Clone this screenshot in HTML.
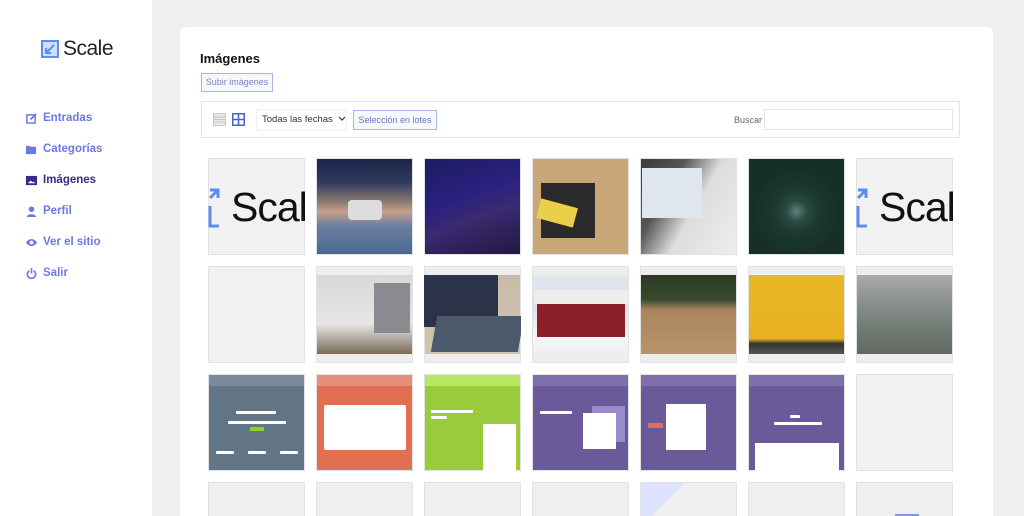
<!DOCTYPE html>
<html style="width:1024px;height:516px;overflow:hidden"><head><meta charset="utf-8"><style>
*{margin:0;padding:0;box-sizing:border-box}
body{width:1024px;height:516px;overflow:hidden;background:#efefef;font-family:"Liberation Sans",sans-serif;position:relative}
.side{position:absolute;left:0;top:0;width:152px;height:516px;background:#fff}
.logo{position:absolute;left:41px;top:37px;font-size:21px;color:#222;display:flex;align-items:center;gap:4px;letter-spacing:-0.5px}
.nav{position:absolute;left:26px;font-size:11.5px;font-weight:bold;color:#6b78e6;display:flex;align-items:center;gap:6px}
.nav.act{color:#3b2a8c}
.ic{width:11px;height:11px;display:inline-block}
.card{position:absolute;left:180px;top:27px;width:813px;height:489px;background:#fff;border-radius:6px 6px 0 0}
.t{position:absolute;white-space:nowrap}
.tile{position:absolute;width:97px;height:97px;background:#efefef;overflow:hidden;box-shadow:inset 0 0 0 1px #e2e2e2}
.r4{height:34px;box-shadow:inset 1px 1px 0 #e2e2e2,inset -1px 0 0 #e2e2e2}
.sc{font-size:41px;color:#111;position:absolute;left:23px;top:26px;letter-spacing:-1px}
.bar{position:absolute;height:3px;background:#fff;border-radius:1px}
</style></head><body>
<div class="side">
 <div class="logo"><svg width="18" height="18" viewBox="0 0 18 18"><rect x="1" y="1" width="16" height="16" fill="#cfe0ff" stroke="#5b8ef0" stroke-width="2"/><path d="M5 13L13 5M5 8v5h5" stroke="#5b8ef0" stroke-width="2" fill="none"/></svg><span>Scale</span></div>
 <div class="nav" style="top:112px"><svg class="ic" viewBox="0 0 12 12"><rect x="1" y="2" width="9" height="9" fill="none" stroke="#6b78e6" stroke-width="1.6"/><path d="M5 7l6-6" stroke="#6b78e6" stroke-width="2"/></svg>Entradas</div>
 <div class="nav" style="top:143px"><svg class="ic" viewBox="0 0 12 12"><path d="M0 2h4l1 1h6v8H0z" fill="#6b78e6"/></svg>Categorías</div>
 <div class="nav act" style="top:174px"><svg class="ic" viewBox="0 0 12 12"><rect x="0" y="1" width="12" height="10" fill="#3b2a8c"/><path d="M2 9l3-3 2 2 1-1 2 2z" fill="#fff"/></svg>Imágenes</div>
 <div class="nav" style="top:205px"><svg class="ic" viewBox="0 0 12 12"><circle cx="6" cy="3.5" r="3" fill="#6b78e6"/><path d="M1 12c0-4 10-4 10 0z" fill="#6b78e6"/></svg>Perfil</div>
 <div class="nav" style="top:236px"><svg class="ic" viewBox="0 0 12 12"><path d="M0 6c3-5 9-5 12 0c-3 5-9 5-12 0z" fill="#6b78e6"/><circle cx="6" cy="6" r="2" fill="#fff"/></svg>Ver el sitio</div>
 <div class="nav" style="top:267px"><svg class="ic" viewBox="0 0 12 12"><path d="M3.5 3a4.5 4.5 0 1 0 5 0" fill="none" stroke="#6b78e6" stroke-width="1.8"/><path d="M6 0v6" stroke="#6b78e6" stroke-width="1.8"/></svg>Salir</div>
</div>
<div class="card"></div>
<div class="t" style="left:200px;top:51px;font-size:13px;font-weight:bold;color:#111">Imágenes</div>
<div class="t" style="left:201px;top:73px;width:72px;height:19px;border:1px solid #a9b3ee;background:#f7f8ff;font-size:9px;color:#7a84c8;text-align:center;line-height:17px">Subir imágenes</div>
<div class="t" style="left:201px;top:101px;width:759px;height:37px;border:1px solid #e3e3e3"></div>
<svg class="t" style="left:213px;top:113px" width="13" height="13"><rect x="0.5" y="0.5" width="12" height="12" fill="#e8e8e8" stroke="#c8c8c8"/><path d="M1 4h11M1 6.5h11M1 9h11" stroke="#c8c8c8"/></svg>
<svg class="t" style="left:232px;top:113px" width="13" height="13"><rect x="0.75" y="0.75" width="11.5" height="11.5" fill="none" stroke="#4a63c9" stroke-width="1.5"/><path d="M6.5 1v11M1 6.5h11" stroke="#4a63c9" stroke-width="1.5"/></svg>
<div class="t" style="left:256px;top:109px;width:91px;height:22px;border:1px solid #eee;font-size:9.5px;color:#333;line-height:20px;padding-left:5px">Todas las fechas<svg width="8" height="6" viewBox="0 0 8 6" style="margin-left:5px"><path d="M1 1l3 3 3-3" stroke="#333" stroke-width="1.2" fill="none"/></svg></div>
<div class="t" style="left:353px;top:110px;width:84px;height:20px;border:1px solid #a9b3ee;background:#f7f8ff;font-size:9px;color:#6a74c0;text-align:center;line-height:18px">Selección en lotes</div>
<div class="t" style="left:734px;top:115px;font-size:9px;color:#666">Buscar</div>
<div class="t" style="left:764px;top:109px;width:189px;height:21px;border:1px solid #e6e6e6"></div>

<!-- row1 -->
<div class="tile" style="left:208px;top:158px;background:#f2f2f2"><svg class="t" style="left:0;top:30px" width="12" height="40"><path d="M2 2h8v8M10 2L2 10M2 18v20h9" stroke="#5b8ef0" stroke-width="3" fill="none"/></svg><span class="sc">Scal</span></div>
<div class="tile" style="left:316px;top:158px;background:linear-gradient(#1c2448 0%,#2f3a5c 25%,#8a7a70 45%,#c7a08a 55%,#6a7fa0 70%,#4a6790 100%)"><div class="t" style="left:32px;top:42px;width:34px;height:20px;background:#ddd;border-radius:4px"></div></div>
<div class="tile" style="left:424px;top:158px;background:linear-gradient(160deg,#1e1c5e,#2a2080 40%,#3a2a70 60%,#201840)"></div>
<div class="tile" style="left:532px;top:158px;background:#c9a678"><div class="t" style="left:9px;top:25px;width:54px;height:55px;background:#2a2a2a"></div><div class="t" style="left:6px;top:45px;width:38px;height:20px;background:#e8d04a;transform:rotate(15deg)"></div></div>
<div class="tile" style="left:640px;top:158px;background:linear-gradient(120deg,#3a3a3a 0%,#555 30%,#ddd 55%,#eee 100%)"><div class="t" style="left:2px;top:10px;width:60px;height:50px;background:#e0e6ee"></div></div>
<div class="tile" style="left:748px;top:158px;background:radial-gradient(circle at 50% 55%,#5a8080 0,#2a4a40 15%,#1c3a30 30%,#163026 60%)"></div>
<div class="tile" style="left:856px;top:158px;background:#f2f2f2"><svg class="t" style="left:0;top:30px" width="12" height="40"><path d="M2 2h8v8M10 2L2 10M2 18v20h9" stroke="#5b8ef0" stroke-width="3" fill="none"/></svg><span class="sc">Scal</span></div>
<!-- row2 -->
<div class="tile" style="left:208px;top:266px;background:#f1f1f1"></div>
<div class="tile" style="left:316px;top:266px;background:linear-gradient(#eee 0 9px,#d8d8d8 9px,#e6e6e6 60%,#7a6a58 88px,#eee 88px)"><div class="t" style="left:58px;top:17px;width:36px;height:50px;background:#8a8a90"></div></div>
<div class="tile" style="left:424px;top:266px;background:linear-gradient(#eee 0 9px,#c8bca8 9px,#d0c4b0 88px,#eee 88px)"><div class="t" style="left:0;top:9px;width:74px;height:52px;background:#2a3348"></div><div class="t" style="left:10px;top:50px;width:87px;height:36px;background:#4a5a6a;transform:skewX(-10deg)"></div></div>
<div class="tile" style="left:532px;top:266px;background:linear-gradient(#eee 0 9px,#e2e8ee 9px,#dde 40%,#f6f6f8 75%,#eee 88px)"><div class="t" style="left:5px;top:33px;width:88px;height:38px;background:#8a2028"></div><div class="t" style="left:2px;top:24px;width:94px;height:14px;background:#eee"></div></div>
<div class="tile" style="left:640px;top:266px;background:linear-gradient(#eee 0 9px,#2a3a22 9px,#3a4a30 35%,#a8855e 45%,#b89468 88px,#eee 88px)"></div>
<div class="tile" style="left:748px;top:266px;background:linear-gradient(#eee 0 9px,#e8b828 9px,#e8b020 75%,#333 80%,#555 88px,#eee 88px)"></div>
<div class="tile" style="left:856px;top:266px;background:linear-gradient(#eee 0 9px,#aaa 9px,#7d8580 50%,#606860 88px,#eee 88px)"></div>
<!-- row3 -->
<div class="tile" style="left:208px;top:374px;background:linear-gradient(#7a8a99 0 12px,#627585 12px)"><div class="bar" style="left:28px;top:37px;width:40px"></div><div class="bar" style="left:20px;top:47px;width:58px"></div><div class="t" style="left:42px;top:53px;width:14px;height:4px;background:#8fd120"></div><div class="bar" style="left:8px;top:77px;width:18px"></div><div class="bar" style="left:40px;top:77px;width:18px"></div><div class="bar" style="left:72px;top:77px;width:18px"></div></div>
<div class="tile" style="left:316px;top:374px;background:linear-gradient(#e5907a 0 12px,#e36f52 12px)"><div class="t" style="left:8px;top:31px;width:82px;height:45px;background:#fff;border-radius:2px"></div></div>
<div class="tile" style="left:424px;top:374px;background:linear-gradient(#b8e860 0 12px,#9acb3c 12px)"><div class="bar" style="left:7px;top:36px;width:42px"></div><div class="bar" style="left:7px;top:42px;width:16px"></div><div class="t" style="left:59px;top:50px;width:33px;height:47px;background:#fff"></div></div>
<div class="tile" style="left:532px;top:374px;background:linear-gradient(#8070aa 0 12px,#6a5a9a 12px)"><div class="t" style="left:60px;top:32px;width:33px;height:36px;background:#9a8cc8"></div><div class="t" style="left:51px;top:39px;width:33px;height:36px;background:#fff"></div><div class="bar" style="left:8px;top:37px;width:32px"></div></div>
<div class="tile" style="left:640px;top:374px;background:linear-gradient(#8070aa 0 12px,#6a5a9a 12px)"><div class="t" style="left:26px;top:30px;width:40px;height:46px;background:#fff"></div><div class="t" style="left:8px;top:49px;width:15px;height:5px;background:#e36f52"></div></div>
<div class="tile" style="left:748px;top:374px;background:linear-gradient(#8070aa 0 12px,#6a5a9a 12px)"><div class="bar" style="left:26px;top:48px;width:48px"></div><div class="bar" style="left:42px;top:41px;width:10px"></div><div class="t" style="left:7px;top:69px;width:84px;height:30px;background:#fff"></div></div>
<div class="tile" style="left:856px;top:374px;background:#f1f1f1"></div>
<!-- row4 -->
<div class="tile r4" style="left:208px;top:482px"></div>
<div class="tile r4" style="left:316px;top:482px"></div>
<div class="tile r4" style="left:424px;top:482px"></div>
<div class="tile r4" style="left:532px;top:482px"></div>
<div class="tile r4" style="left:640px;top:482px;background:linear-gradient(135deg,#dde3ff 0 35%,#efefef 35%)"></div>
<div class="tile r4" style="left:748px;top:482px"></div>
<div class="tile r4" style="left:856px;top:482px"><div class="t" style="left:39px;top:32px;width:24px;height:2px;background:#8a94e0"></div></div>
</body></html>
